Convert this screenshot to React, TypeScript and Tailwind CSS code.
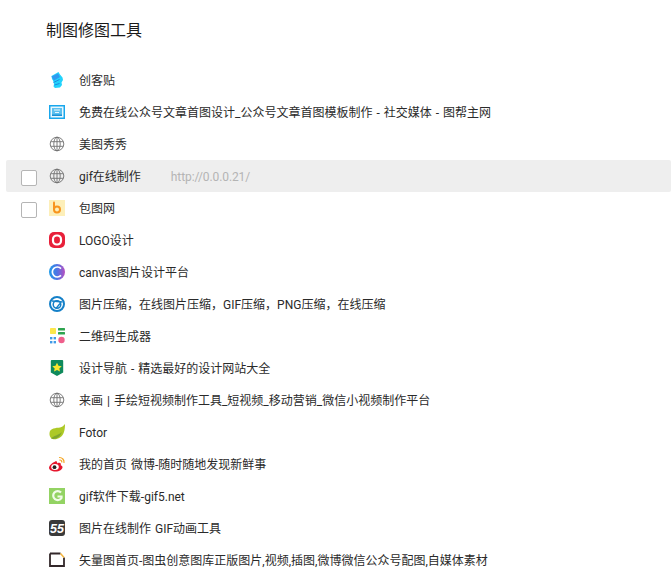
import React from "react";

const Globe = () => (
  <svg viewBox="0 0 16 16" className="w-4 h-4" fill="none" stroke="#707070" strokeWidth="0.9">
    <circle cx="8" cy="8" r="6.8" />
    <ellipse cx="8" cy="8" rx="3.2" ry="6.8" />
    <path d="M8 1.2v13.600M1.800 5.700h12.400M1.800 10.300h12.400" />
  </svg>
);

const Chuangke = () => (
  <svg viewBox="0 0 16 16" className="w-4 h-4">
    <path d="M2.500 4 9.500 0 11 2.500l2.500 3 .5 2.500-1.500 2.500.5 2.500-2 2.500-5 .5-1.500-1.500.5-2.500L4 8.500 3 7z" fill="#22d3fc" />
    <path d="M2.500 4.500 9 1.500l2 3.500-6 3.500z" fill="#2f9af0" />
    <path d="M4.500 10.500l6-3M5.500 13l5-1.500" stroke="#1b76d8" strokeWidth="0.8" />
  </svg>
);

const Tuba = () => (
  <svg viewBox="0 0 16 16" className="w-4 h-4">
    <rect x="0" y="1" width="16" height="14" fill="#19a7ec" />
    <rect x="1.500" y="2.500" width="13" height="11" fill="#e9f7fd" />
    <rect x="3" y="4" width="10" height="8" fill="#5cc0ef" />
    <path d="M5 6h6M6 8.500h4" stroke="#e9f7fd" strokeWidth="1" />
    <rect x="3" y="10.500" width="10" height="1.500" fill="#1a90d6" />
  </svg>
);

const Baotu = () => (
  <svg viewBox="0 0 16 16" className="w-4 h-4">
    <rect width="16" height="16" fill="#fdefb9" />
    <path d="M5 2.500v6.500" stroke="#f8941d" strokeWidth="2" strokeLinecap="round" />
    <circle cx="8" cy="9.500" r="3" fill="none" stroke="#f8941d" strokeWidth="2" />
  </svg>
);

const LogoIcon = () => (
  <svg viewBox="0 0 16 16" className="w-4 h-4">
    <rect width="16" height="16" rx="5" fill="#e8203a" />
    <rect x="4" y="3.500" width="8" height="9" rx="3.800" fill="none" stroke="#fff" strokeWidth="2.200" />
  </svg>
);

const Canvas = () => (
  <svg viewBox="0 0 16 16" className="w-4 h-4">
    <defs>
      <linearGradient id="cg" x1="0" y1="0" x2="1" y2="0">
        <stop offset="0" stopColor="#1d9be8" />
        <stop offset="0.5" stopColor="#4f74e4" />
        <stop offset="1" stopColor="#b84fc0" />
      </linearGradient>
    </defs>
    <circle cx="8" cy="8" r="8" fill="url(#cg)" />
    <path d="M12 4.600A5 5 0 1 0 12 11.400" fill="none" stroke="#fff" strokeWidth="1.700" />
  </svg>
);

const Tinypng = () => (
  <svg viewBox="0 0 16 16" className="w-4 h-4" fill="none" stroke="#1580c8">
    <circle cx="8" cy="8" r="7" strokeWidth="2" />
    <circle cx="8" cy="8.500" r="3.800" strokeWidth="1.500" />
    <path d="M3 5 13.500 6M7 12.500l4-5" strokeWidth="1.300" />
  </svg>
);

const Qr = () => (
  <svg viewBox="0 0 16 16" className="w-4 h-4">
    <rect x="1" y="0" width="6" height="6" rx="0.800" fill="#fde74c" />
    <rect x="9" y="0" width="7" height="2.500" rx="0.500" fill="#2ea44f" />
    <rect x="9" y="4" width="7" height="2.500" rx="0.500" fill="#2ea44f" />
    <rect x="1" y="9" width="2.400" height="2.400" fill="#3f9be8" />
    <rect x="4.600" y="9" width="2.400" height="2.400" fill="#3f9be8" />
    <rect x="1" y="13" width="2.400" height="2.400" fill="#3f9be8" />
    <rect x="4.600" y="13" width="2.400" height="2.400" fill="#3f9be8" />
    <circle cx="12.500" cy="12" r="3.200" fill="#ef5f8c" />
  </svg>
);

const Shield = () => (
  <svg viewBox="0 0 16 16" className="w-4 h-4">
    <path d="M2.800 0h10.400q1 0 1 1v11.500L8 16l-6.200-3.500V1q0-1 1-1z" fill="#0f8a5c" />
    <path d="M8 2.800l1.500 3 3.200.4-2.400 2.200.7 3.200L8 10l-3 1.600.7-3.200-2.400-2.200 3.200-.4z" fill="#fbe62e" />
  </svg>
);

const Leaf = () => (
  <svg viewBox="0 0 16 16" className="w-4 h-4">
    <path d="M0.500 9C1 4 7 4 11 3.500 13 3 15 1.500 16 0c0 6-1 11-5 13.500-3 2-7 2.500-9 .5C1 13 .3 11 .5 9z" fill="#adc926" />
    <path d="M2 14.500c3-3 7-3 11-6.500-1.500 3.500-3 5.500-6 6.500-2 .6-4 .5-5 0z" fill="#7fa62e" />
  </svg>
);

const Weibo = () => (
  <svg viewBox="0 0 16 16" className="w-4 h-4">
    <path d="M6.500 5.500C3.500 6.500 0 9.500 0 11.800 0 14 3 15.500 6.500 15.500c4 0 7-2.300 7-4.300 0-1.500-1.500-1.700-1.800-2 .5-1.500 0-2.500-1.500-2.500-1 0-1.700.5-2 .5 0-2-.7-2.300-2.700-1.700z" fill="#e6162d" />
    <ellipse cx="6" cy="11" rx="3.800" ry="3" fill="#fff" />
    <circle cx="5.500" cy="11.200" r="1.900" fill="#222" />
    <path d="M10.500 1.500a4.500 4.500 0 0 1 4.500 5M10.800 4a2 2 0 0 1 2 2" fill="none" stroke="#f5a623" strokeWidth="1.200" strokeLinecap="round" />
  </svg>
);

const GifG = () => (
  <svg viewBox="0 0 16 16" className="w-4 h-4">
    <rect width="16" height="16" fill="#93d363" />
    <path d="M12 4.500A4.500 4.500 0 1 0 12.500 10V8.500H8.500" fill="none" stroke="#f1fbe9" strokeWidth="2.200" />
  </svg>
);

const FiveFive = () => (
  <svg viewBox="0 0 16 16" className="w-4 h-4">
    <rect width="16" height="16" rx="3" fill="#3a3a3a" />
    <text x="8" y="12.800" textAnchor="middle" fill="#fff" fontSize="12.500" fontWeight="700" fontStyle="italic" fontFamily="'Liberation Sans',sans-serif">55</text>
  </svg>
);

const Tuchong = () => (
  <svg viewBox="0 0 16 16" className="w-4 h-4">
    <path d="M1 1.500h10.500M1 1.500v12.500h14V5.500" fill="none" stroke="#33282a" strokeWidth="1.800" />
    <path d="M11.500 1.500 15 5.500" stroke="#f5b53c" strokeWidth="1.500" />
  </svg>
);

const rows: { icon: React.ReactNode; label: string; url?: string; check?: boolean; hover?: boolean }[] = [
  { icon: <Chuangke />, label: "创客贴" },
  { icon: <Tuba />, label: "免费在线公众号文章首图设计_公众号文章首图模板制作 - 社交媒体 - 图帮主网" },
  { icon: <Globe />, label: "美图秀秀" },
  { icon: <Globe />, label: "gif在线制作", url: "http://0.0.0.21/", check: true, hover: true },
  { icon: <Baotu />, label: "包图网", check: true },
  { icon: <LogoIcon />, label: "LOGO设计" },
  { icon: <Canvas />, label: "canvas图片设计平台" },
  { icon: <Tinypng />, label: "图片压缩，在线图片压缩，GIF压缩，PNG压缩，在线压缩" },
  { icon: <Qr />, label: "二维码生成器" },
  { icon: <Shield />, label: "设计导航 - 精选最好的设计网站大全" },
  { icon: <Globe />, label: "来画 | 手绘短视频制作工具_短视频_移动营销_微信小视频制作平台" },
  { icon: <Leaf />, label: "Fotor" },
  { icon: <Weibo />, label: "我的首页 微博-随时随地发现新鲜事" },
  { icon: <GifG />, label: "gif软件下载-gif5.net" },
  { icon: <FiveFive />, label: "图片在线制作 GIF动画工具" },
  { icon: <Tuchong />, label: "矢量图首页-图虫创意图库正版图片,视频,插图,微博微信公众号配图,自媒体素材" },
];

export default function App() {
  return (
    <div className="w-[671px] h-[585px] overflow-hidden bg-white font-['Roboto','Noto_Sans_CJK_SC',sans-serif] text-[#2a2a2a]">
      <h1 className="pl-[46px] pt-[21px] h-[64px] text-[16px] leading-[20px] font-normal text-[#1a1a1a]">制图修图工具</h1>
      <ul className="pl-[6px]">
        {rows.map((r, i) => (
          <li
            key={i}
            className={`flex items-center h-[32px] rounded-[2px] ${r.hover ? "bg-[#eeeeee]" : ""}`}
          >
            <span className="w-[43px] shrink-0 pl-[15px] pt-[4px] flex items-center">
              {r.check && <span className="block w-4 h-4 rounded-[2px] border border-[#b5b5b5] bg-white" />}
            </span>
            <span className="w-4 h-4 shrink-0">{r.icon}</span>
            <span className="ml-[14px] pt-[2px] text-[12px] leading-[30px] whitespace-nowrap [word-spacing:1px]">{r.label}</span>
            {r.url && <span className="ml-[30px] pt-[2px] text-[12px] tracking-[-0.1px] text-[#b4b4b4]">{r.url}</span>}
          </li>
        ))}
      </ul>
    </div>
  );
}
